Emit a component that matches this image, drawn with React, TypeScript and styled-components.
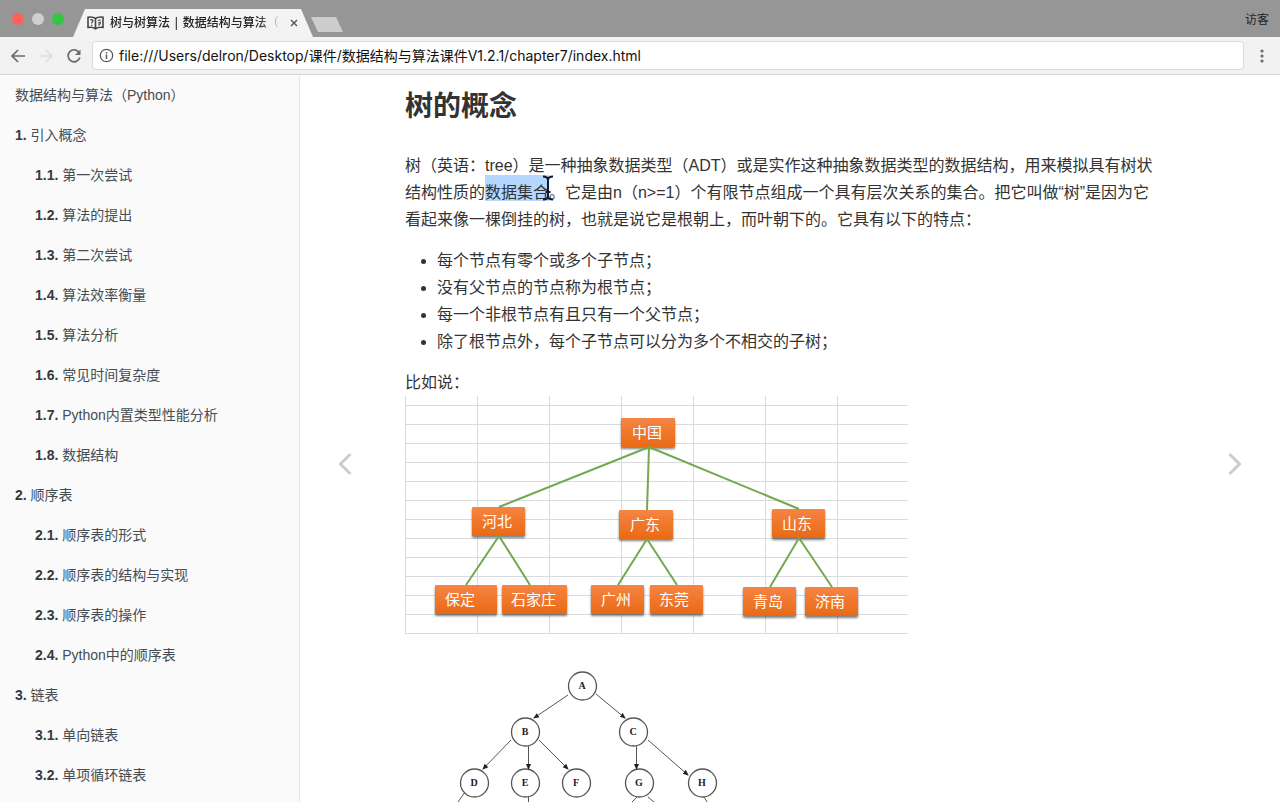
import React from "react";
import styled, { createGlobalStyle } from "styled-components";

const GlobalStyle = createGlobalStyle`
  * { box-sizing: border-box; }
  body {
    margin: 0;
    font-family: "Liberation Sans", "Noto Sans CJK SC", sans-serif;
    color: #333;
    background: #fff;
  }
  button { border: 0; padding: 0; background: none; font: inherit; color: inherit; cursor: pointer; }
`;

const Window = styled.div`
  height: 100vh;
  display: flex;
  flex-direction: column;
  overflow: hidden;
`;

const TabStrip = styled.header`
  flex: none;
  height: 37px;
  display: flex;
  align-items: flex-end;
  background: #969696;
`;

const WindowControls = styled.div`
  display: flex;
  gap: 8px;
  padding: 0 9px 12px 12px;
`;

const ControlDot = styled.button<{ $color: string }>`
  width: 12px;
  height: 12px;
  border-radius: 50%;
  background: ${(p) => p.$color};
`;

const Tab = styled.div`
  width: 240px;
  height: 28px;
  padding: 0 15px 0 14px;
  display: flex;
  align-items: center;
  background: #f3f3f3;
  clip-path: polygon(12px 0, calc(100% - 12px) 0, 100% 100%, 0 100%);
`;

const TabTitle = styled.span`
  flex: 1;
  min-width: 0;
  margin-left: 6px;
  white-space: nowrap;
  font-family: "Noto Sans", "Noto Sans CJK SC", sans-serif;
  font-size: 12px;
  font-weight: 500;
  line-height: 20px;
  color: #222;
  mask-image: linear-gradient(to right, #000 86%, transparent);
`;

const TabClose = styled.button`
  display: flex;
  margin: 0 0 0 8px;
  color: #555;
`;

const NewTab = styled.button`
  width: 32px;
  height: 15px;
  margin: 0 0 5px -2px;
  background: #cdcdcd;
  clip-path: polygon(0 0, 25px 0, 100% 100%, 7px 100%);
`;

const Guest = styled.button`
  margin-left: auto;
  padding: 0 11px 7px 0;
  font-size: 12px;
  line-height: 20px;
  color: #222;
`;

const Toolbar = styled.nav`
  flex: none;
  height: 38px;
  padding: 0 10px;
  display: flex;
  align-items: center;
  background: #f2f2f2;
  border-bottom: 1px solid #d6d6d6;
`;

const IconButton = styled.button<{ $color?: string }>`
  width: 28px;
  height: 28px;
  display: flex;
  align-items: center;
  color: ${(p) => p.$color ?? "#6a6a6a"};
`;

const MenuButton = styled(IconButton)`
  width: 16px;
  margin-left: 10px;
  justify-content: center;
`;

const AddressBar = styled.label`
  flex: 1;
  height: 29px;
  margin-left: -2px;
  padding: 0 6px;
  display: flex;
  align-items: center;
  gap: 5px;
  background: #fff;
  border: 1px solid #dcdcdc;
  border-radius: 4px;
  color: #5c5c5c;
`;

const AddressInput = styled.input`
  flex: 1;
  min-width: 0;
  padding: 0;
  border: 0;
  outline: 0;
  background: none;
  font-family: Inter, "Noto Sans CJK SC", sans-serif;
  font-size: 14px;
  line-height: 20px;
  color: #111;
`;

const Body = styled.div`
  flex: 1;
  min-height: 0;
  display: flex;
`;

const Sidebar = styled.aside`
  flex: none;
  width: 300px;
  overflow: hidden;
  background: #fafafa;
  border-right: 1px solid #e9e9e9;
`;

const ChapterList = styled.ul`
  margin: 0;
  padding: 0;
  list-style: none;
`;

const ChapterLink = styled.a<{ $nested?: boolean }>`
  display: block;
  padding: 10px 15px 10px ${(p) => (p.$nested ? "35px" : "15px")};
  font-size: 14px;
  line-height: 20px;
  color: #454d54;
  text-decoration: none;
  white-space: nowrap;

  b { color: #333b42; }
`;

const Main = styled.main`
  flex: 1;
  min-width: 0;
  display: flex;
  overflow: hidden;
`;

const PageTurn = styled.button`
  flex: 1;
  min-width: 40px;
  padding-top: 50px;
  display: flex;
  align-items: center;
  justify-content: center;
  color: #ccc;
`;

const Article = styled.article`
  flex: 0 1 800px;
  min-width: 0;
  padding: 13px 15px 0;
`;

const Title = styled.h2`
  margin: 0 0 26px;
  font-size: 28px;
  line-height: 38px;
  font-weight: 700;
`;

const Paragraph = styled.p`
  margin: 0 0 14px;
  font-size: 16px;
  line-height: 27px;
`;

const Selected = styled.span`
  position: relative;
  padding: 9px 0 0;
  background: #b3d7fe;
`;

const TextCursor = styled.svg`
  position: absolute;
  right: -5px;
  top: 0;
`;

const Features = styled.ul`
  margin: 0 0 14px;
  padding: 0 0 0 32px;
  font-size: 16px;
  line-height: 27px;
`;

const Figure = styled.svg`
  display: block;
  max-width: 100%;
`;

type Chapter = [num: string, title: string];

const chapters: Chapter[] = [
  ["1.", "引入概念"],
  ["1.1.", "第一次尝试"],
  ["1.2.", "算法的提出"],
  ["1.3.", "第二次尝试"],
  ["1.4.", "算法效率衡量"],
  ["1.5.", "算法分析"],
  ["1.6.", "常见时间复杂度"],
  ["1.7.", "Python内置类型性能分析"],
  ["1.8.", "数据结构"],
  ["2.", "顺序表"],
  ["2.1.", "顺序表的形式"],
  ["2.2.", "顺序表的结构与实现"],
  ["2.3.", "顺序表的操作"],
  ["2.4.", "Python中的顺序表"],
  ["3.", "链表"],
  ["3.1.", "单向链表"],
  ["3.2.", "单项循环链表"],
];

const features = [
  "每个节点有零个或多个子节点；",
  "没有父节点的节点称为根节点；",
  "每一个非根节点有且只有一个父节点；",
  "除了根节点外，每个子节点可以分为多个不相交的子树；",
];

type Place = { name: string; x: number; y: number; w: number; tx: number };

const places: Place[] = [
  { name: "中国", x: 216, y: 22, w: 54, tx: 227 },
  { name: "河北", x: 67, y: 111, w: 53, tx: 77 },
  { name: "广东", x: 214, y: 114, w: 54, tx: 225 },
  { name: "山东", x: 367, y: 113, w: 53, tx: 377 },
  { name: "保定", x: 30, y: 189, w: 62, tx: 40 },
  { name: "石家庄", x: 97, y: 189, w: 65, tx: 106 },
  { name: "广州", x: 186, y: 189, w: 53, tx: 196 },
  { name: "东莞", x: 245, y: 189, w: 53, tx: 254 },
  { name: "青岛", x: 338, y: 191, w: 53, tx: 348 },
  { name: "济南", x: 400, y: 191, w: 53, tx: 410 },
];

const branches = [
  "M244 51L94 111", "M244 51L242 114", "M244 51L394 113",
  "M94 140L61 189", "M94 140L125 189",
  "M242 143L213 189", "M242 143L272 189",
  "M394 142L365 191", "M394 142L427 191",
];

const range = (n: number) => Array.from({ length: n }, (_, i) => i);

const RegionTree = () => (
  <Figure width="503" height="240" viewBox="0 0 503 240" role="img" aria-label="中国地区树">
    <defs>
      <linearGradient id="orange" x1="0" y1="0" x2="0" y2="1">
        <stop offset="0" stopColor="#f68443" />
        <stop offset="1" stopColor="#e96a15" />
      </linearGradient>
      <filter id="drop" x="-20%" y="-20%" width="140%" height="160%">
        <feDropShadow dx="0" dy="2" stdDeviation="1.2" floodColor="#000" floodOpacity="0.5" />
      </filter>
    </defs>
    <g stroke="#d9dade">
      {range(7).map((i) => <path key={i} d={`M${i * 72 + 0.5} 0V238`} />)}
      {range(13).map((i) => <path key={i} d={`M0 ${i * 19 + 9.5}H503`} />)}
    </g>
    {places.map((p) => (
      <rect key={p.name} x={p.x} y={p.y} width={p.w} height="29" rx="1" fill="url(#orange)" filter="url(#drop)" />
    ))}
    <g stroke="#74a850" strokeWidth="2">
      {branches.map((d) => <path key={d} d={d} />)}
    </g>
    <g fill="#fff" fontSize="15" fontFamily='"Noto Sans CJK SC", sans-serif'>
      {places.map((p) => <text key={p.name} x={p.tx} y={p.y + 20}>{p.name}</text>)}
    </g>
  </Figure>
);

const letters: [string, number, number][] = [
  ["A", 177, 26], ["B", 120, 72], ["C", 228, 72],
  ["D", 69, 123], ["E", 120, 123], ["F", 171, 123], ["G", 234, 123], ["H", 297, 123],
];

const arrows = [
  "M163 35L129 58", "M191 34L220 58",
  "M106 80L78 109", "M123.5 86V109", "M134 80L163 109",
  "M231.5 86V109", "M243 80L283 115",
];

const tails = ["M60 132L53 142L50 148", "M123.5 137V150", "M232 137L222 147", "M243 137L255 147", "M299 137L306 148"];

const LetterTree = () => (
  <Figure width="503" height="200" viewBox="0 0 503 200" role="img" aria-label="字母树">
    <defs>
      <marker id="tip" markerUnits="userSpaceOnUse" markerWidth="6" markerHeight="6" refX="5" refY="3" orient="auto">
        <path d="M0 0.5L6 3L0 5.5Z" fill="#222" />
      </marker>
    </defs>
    <g fill="none" stroke="#555">
      {letters.map(([l, x, y]) => <circle key={l} cx={x + 0.5} cy={y} r="14" strokeWidth="1.3" />)}
      {arrows.map((d) => <path key={d} d={d} markerEnd="url(#tip)" />)}
      {tails.map((d) => <path key={d} d={d} />)}
    </g>
    <g fill="#222" fontSize="10" fontWeight="700" fontFamily='"Liberation Serif", serif' textAnchor="middle">
      {letters.map(([l, x, y]) => <text key={l} x={x} y={y + 3}>{l}</text>)}
    </g>
  </Figure>
);

const Figures = styled.div`
  display: flex;
  flex-direction: column;
  gap: 24px;
`;

export default function App() {
  return (
    <Window>
      <GlobalStyle />
      <TabStrip>
        <WindowControls>
          <ControlDot $color="#fc615c" aria-label="关闭" />
          <ControlDot $color="#cfcfcf" aria-label="最小化" />
          <ControlDot $color="#2fc840" aria-label="缩放" />
        </WindowControls>
        <Tab>
          <svg width="17" height="14" viewBox="0 0 17 14" fill="none" stroke="#444" strokeWidth="1.6">
            <path d="M8.5 2.5C6.5 1 4 .8 1 1.2V11.4C4 11 6.5 11.3 8.5 12.8C10.5 11.3 13 11 16 11.4V1.2C13 .8 10.5 1 8.5 2.5ZV12.8" />
            <path d="M3.2 4C4 3.400 5.500 3.500 6 4.500C6 5.500 4.700 6 4.700 7.500M4.700 8.800V10M11 4.500L13.500 3.800M11.500 9.500C12.800 8.500 13.500 7.500 13.500 5.500M11 7L12.500 6.500" strokeWidth="1.2" />
          </svg>
          <TabTitle>树与树算法 | 数据结构与算法（</TabTitle>
          <TabClose aria-label="关闭标签页">
            <svg width="8" height="8" viewBox="0 0 8 8" stroke="currentColor" strokeWidth="1.4"><path d="M1 1L7 7M7 1L1 7" /></svg>
          </TabClose>
        </Tab>
        <NewTab aria-label="新标签页" />
        <Guest>访客</Guest>
      </TabStrip>
      <Toolbar>
        <IconButton aria-label="后退">
          <svg width="16" height="14" viewBox="0 0 16 14" fill="none" stroke="currentColor" strokeWidth="1.7"><path d="M15 7H2.500M8 1L2 7L8 13" /></svg>
        </IconButton>
        <IconButton $color="#dedede" aria-label="前进">
          <svg width="16" height="14" viewBox="0 0 16 14" fill="none" stroke="currentColor" strokeWidth="1.7"><path d="M1 7H13.500M8 1L14 7L8 13" /></svg>
        </IconButton>
        <IconButton aria-label="重新加载">
          <svg width="16" height="16" viewBox="0 0 16 16" fill="none" stroke="currentColor" strokeWidth="1.7">
            <path d="M13.200 4.500A6 6 0 1 0 13.900 9.500" />
            <path d="M14.500 1.500V7H9Z" fill="currentColor" stroke="none" />
          </svg>
        </IconButton>
        <AddressBar>
          <svg width="15" height="15" viewBox="0 0 15 15" fill="none" stroke="currentColor" strokeWidth="1.3">
            <circle cx="7.5" cy="7.5" r="6.2" /><path d="M7.5 6.500V11M7.500 4V5.400" strokeWidth="1.5" />
          </svg>
          <AddressInput aria-label="地址" defaultValue="file:///Users/delron/Desktop/课件/数据结构与算法课件V1.2.1/chapter7/index.html" />
        </AddressBar>
        <MenuButton aria-label="菜单">
          <svg width="4" height="14" viewBox="0 0 4 14" fill="currentColor"><circle cx="2" cy="2" r="1.6" /><circle cx="2" cy="7" r="1.6" /><circle cx="2" cy="12" r="1.6" /></svg>
        </MenuButton>
      </Toolbar>
      <Body>
        <Sidebar>
          <ChapterList>
            <li><ChapterLink href="#top">数据结构与算法（Python）</ChapterLink></li>
            {chapters.map(([num, title]) => (
              <li key={num}>
                <ChapterLink href={`#${num}`} $nested={num.length > 2}><b>{num}</b> {title}</ChapterLink>
              </li>
            ))}
          </ChapterList>
        </Sidebar>
        <Main>
          <PageTurn aria-label="上一页">
            <svg width="14" height="24" viewBox="0 0 14 24" fill="none" stroke="currentColor" strokeWidth="3"><path d="M12.500 2L2.500 12L12.500 22" /></svg>
          </PageTurn>
          <Article>
            <Title>树的概念</Title>
            <Paragraph>
              树（英语：tree）是一种抽象数据类型（ADT）或是实作这种抽象数据类型的数据结构，用来模拟具有树状<br />
              结构性质的<Selected>数据集合<TextCursor width="12" height="26" viewBox="0 0 12 26" fill="none" stroke="#111a2c" strokeWidth="2"><path d="M1 1.500C4 1.500 6 2 6 5V21C6 24 4 24.500 1 24.500M11 1.500C8 1.500 6 2 6 5M6 21C6 24 8 24.500 11 24.500M3.500 17H8.500" /></TextCursor></Selected>。它是由n（n&gt;=1）个有限节点组成一个具有层次关系的集合。把它叫做“树”是因为它<br />
              看起来像一棵倒挂的树，也就是说它是根朝上，而叶朝下的。它具有以下的特点：
            </Paragraph>
            <Features>
              {features.map((f) => <li key={f}>{f}</li>)}
            </Features>
            <Paragraph as="div">
              比如说：
              <Figures>
                <RegionTree />
                <LetterTree />
              </Figures>
            </Paragraph>
          </Article>
          <PageTurn aria-label="下一页">
            <svg width="14" height="24" viewBox="0 0 14 24" fill="none" stroke="currentColor" strokeWidth="3"><path d="M1.500 2L11.500 12L1.500 22" /></svg>
          </PageTurn>
        </Main>
      </Body>
    </Window>
  );
}
